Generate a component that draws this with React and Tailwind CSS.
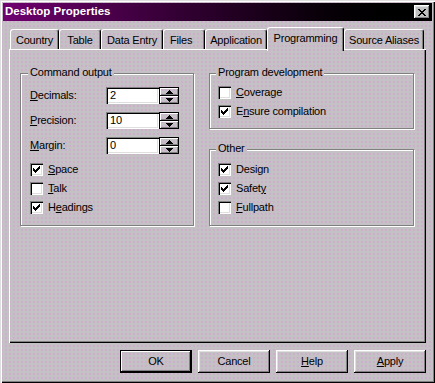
import React from 'react';

const pat = "bg-[#c4c1c4] bg-[image:radial-gradient(circle,#d49cd4_0.5px,transparent_0.9px)] bg-[length:4px_4px] bg-fixed";
const raised = "shadow-[inset_-1px_-1px_0_#000,inset_1px_1px_0_#fff,inset_-2px_-2px_0_#808080,inset_2px_2px_0_#dfdfdf]";
const sunken = "shadow-[inset_1px_1px_0_#808080,inset_2px_2px_0_#000,inset_-1px_-1px_0_#fff,inset_-2px_-2px_0_#dfdfdf]";

function Lbl({ text, k }) {
  if (k == null) return <span>{text}</span>;
  return (
    <span>
      {text.slice(0, k)}
      <span className="underline underline-offset-[1px]">{text[k]}</span>
      {text.slice(k + 1)}
    </span>
  );
}

const checkPx = [
  [6, 0], [5, 1], [6, 1], [0, 2], [4, 2], [5, 2], [6, 2],
  [0, 3], [1, 3], [3, 3], [4, 3], [5, 3], [0, 4], [1, 4], [2, 4], [3, 4], [4, 4],
  [1, 5], [2, 5], [3, 5], [2, 6],
];

function Check({ checked, text, k }) {
  return (
    <div className="flex items-center h-[13px] gap-[5px]">
      <span className={`relative block w-[13px] h-[13px] bg-white ${sunken}`}>
        {checked && (
          <svg className="absolute left-0 top-0" width="13" height="13" shapeRendering="crispEdges">
            {checkPx.map(([x, y]) => (
              <rect key={`${x}-${y}`} x={x + 3} y={y + 3} width="1" height="1" fill="#000" />
            ))}
          </svg>
        )}
      </span>
      <Lbl text={text} k={k} />
    </div>
  );
}

function Arrow({ up }) {
  return (
    <svg width="7" height="4" shapeRendering="crispEdges">
      {up ? (
        <>
          <rect x="3" y="0" width="1" height="1" />
          <rect x="2" y="1" width="3" height="1" />
          <rect x="1" y="2" width="5" height="1" />
          <rect x="0" y="3" width="7" height="1" />
        </>
      ) : (
        <>
          <rect x="0" y="0" width="7" height="1" />
          <rect x="1" y="1" width="5" height="1" />
          <rect x="2" y="2" width="3" height="1" />
          <rect x="3" y="3" width="1" height="1" />
        </>
      )}
    </svg>
  );
}

function Spin({ label, k, value }) {
  return (
    <div className="flex items-center h-[17px]">
      <div className="w-[76px]">
        <Lbl text={label} k={k} />
      </div>
      <div className={`w-[53px] h-[17px] bg-white pl-[4px] flex items-center ${sunken}`}>{value}</div>
      <div className="w-[20px] h-[17px] border border-black flex flex-col">
        <div className={`h-[7px] flex items-center justify-center shadow-[inset_1px_1px_0_#fff,inset_-1px_-1px_0_#808080] ${pat}`}>
          <Arrow up />
        </div>
        <div className="h-px bg-black" />
        <div className={`h-[7px] flex items-center justify-center shadow-[inset_1px_1px_0_#fff,inset_-1px_-1px_0_#808080] ${pat}`}>
          <Arrow />
        </div>
      </div>
    </div>
  );
}

function Group({ title, left, className, children }) {
  return (
    <div className={`relative border border-[#808080] shadow-[1px_1px_0_#fff,inset_1px_1px_0_#fff] ${className}`}>
      <span className={`absolute -top-[8px] ${left} px-[2px] leading-[13px] ${pat}`}>{title}</span>
      {children}
    </div>
  );
}

const tabs = [
  ['Country', 'w-[49px]'],
  ['Table', 'w-[42px]'],
  ['Data Entry', 'w-[62px]'],
  ['Files', 'w-[42px]'],
  ['Application', 'w-[62px]'],
  ['Programming', 'w-[77px]', true],
  ['Source Aliases', 'w-[80px]'],
];

export default function App() {
  return (
    <div
      className={`w-[435px] h-[383px] p-[3px] text-[11px] tracking-[-0.2px] text-black font-['Liberation_Sans',Arial,sans-serif] shadow-[inset_1px_1px_0_#dfdfdf,inset_2px_2px_0_#fff,inset_-1px_-1px_0_#000,inset_-2px_-2px_0_#808080] ${pat}`}
    >
      <div className="h-[18px] flex items-center justify-between pl-[2px] pr-[2px] bg-linear-to-r from-[#700070] to-black">
        <span className="text-white font-bold text-[11.5px] tracking-normal">Desktop Properties</span>
        <button className={`w-[16px] h-[14px] flex items-center justify-center ${raised} bg-[#c0c0c0]`}>
          <svg width="8" height="7" shapeRendering="crispEdges">
            <path d="M0 0h2v1h-2zM6 0h2v1h-2zM1 1h2v1h-2zM5 1h2v1h-2zM2 2h4v1h-4zM3 3h2v1h-2zM2 4h4v1h-4zM1 5h2v1h-2zM5 5h2v1h-2zM0 6h2v1h-2zM6 6h2v1h-2z" fill="#000" />
          </svg>
        </button>
      </div>

      <div className="mt-[6px] mx-[6px]">
        <div className="flex items-end h-[22px] pl-[1px]">
          {tabs.map(([name, w, sel]) => (
            <div
              key={name}
              className={
                sel
                  ? `relative z-10 ${w} h-[24px] -mb-[2px] pb-[3px] flex items-center justify-center border-t border-l border-white border-r border-r-black rounded-t-[3px] shadow-[inset_-1px_0_0_#808080] ${pat}`
                  : `${w} h-[20px] pt-[2px] flex items-center ${name === 'Files' ? 'justify-start pl-[6px]' : 'justify-center'} border-t border-l border-white border-r border-r-black rounded-t-[3px] shadow-[inset_-1px_0_0_#808080]`
              }
            >
              {name}
            </div>
          ))}
        </div>

        <div className="h-[294px] pt-[24px] pl-[11px] flex gap-[15px] shadow-[inset_1px_1px_0_#fff,inset_-1px_-1px_0_#000,inset_-2px_-2px_0_#808080]">
          <Group title="Command output" left="left-[7px]" className="w-[174px] h-[153px] pl-[9px] pt-[13px]">
            <div className="flex flex-col gap-[8px]">
              <Spin label="Decimals:" k={0} value="2" />
              <Spin label="Precision:" k={0} value="10" />
              <Spin label="Margin:" k={0} value="0" />
            </div>
            <div className="mt-[9px] flex flex-col gap-[6px]">
              <Check checked text="Space" k={0} />
              <Check text="Talk" k={0} />
              <Check checked text="Headings" k={1} />
            </div>
          </Group>

          <div className="flex flex-col gap-[20px]">
            <Group title="Program development" left="left-[6px]" className="w-[205px] h-[56px] pl-[8px] pt-[12px]">
              <div className="flex flex-col gap-[6px]">
                <Check text="Coverage" k={0} />
                <Check checked text="Ensure compilation" k={1} />
              </div>
            </Group>
            <Group title="Other" left="left-[6px]" className="w-[205px] h-[77px] pl-[8px] pt-[13px]">
              <div className="flex flex-col gap-[6px]">
                <Check checked text="Design" />
                <Check checked text="Safety" k={5} />
                <Check text="Fullpath" k={0} />
              </div>
            </Group>
          </div>
        </div>
      </div>

      <div className="mt-[7px] mx-[6px] flex justify-end gap-[6px]">
        <button className={`w-[72px] h-[23px] border border-black shadow-[inset_-1px_-1px_0_#000,inset_1px_1px_0_#fff,inset_-2px_-2px_0_#808080] ${pat}`}>OK</button>
        <button className={`w-[72px] h-[23px] ${raised} ${pat}`}>Cancel</button>
        <button className={`w-[72px] h-[23px] ${raised} ${pat}`}>
          <Lbl text="Help" k={0} />
        </button>
        <button className={`w-[72px] h-[23px] ${raised} ${pat}`}>
          <Lbl text="Apply" k={0} />
        </button>
      </div>
    </div>
  );
}
